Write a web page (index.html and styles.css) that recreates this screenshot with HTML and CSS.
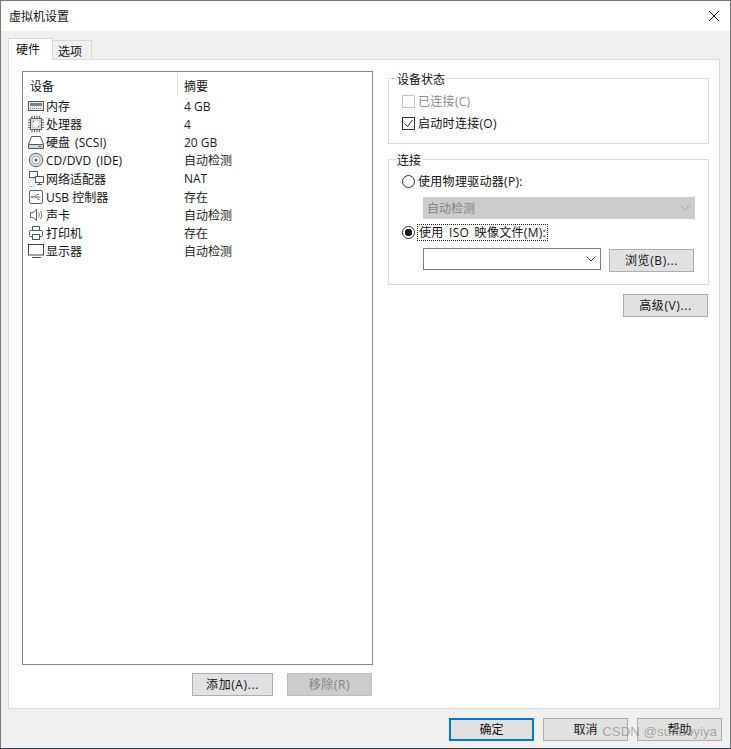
FILE: index.html
```html
<!DOCTYPE html>
<html lang="zh-CN">
  <head>
    <meta charset="UTF-8" />
    <title>虚拟机设置</title>
    <link rel="stylesheet" href="styles.css">
  </head>
  <body>
    <div class="window">
      <div class="titlebar">
        <span class="title">虚拟机设置</span>
        <svg class="close" width="12" height="12" viewBox="0 0 12 12"><path d="M1 1l10 10M11 1L1 11" stroke="#111" fill="none"/></svg>
      </div>
      <div class="content">
        <div class="tabs">
          <div class="tab active">硬件</div>
          <div class="tab">选项</div>
        </div>
        <div class="panel">
          <div class="left">
            <div class="list">
              <div class="list-head">
                <div class="col-device">设备</div>
                <div class="col-summary">摘要</div>
              </div>
              <div class="rows">
                <div class="row">
                  <svg class="icon" viewBox="0 0 16 16"><rect x="0.5" y="3.5" width="15" height="9" fill="#e4e6e8" stroke="#4f5a63"/><rect x="2" y="5" width="12" height="3" fill="#77828b"/><path d="M2 10.500h12" stroke="#77828b" stroke-dasharray="1 1"/></svg>
                  <span class="name">内存</span><span class="value">4 GB</span>
                </div>
                <div class="row">
                  <svg class="icon" viewBox="0 0 16 16"><rect x="2.500" y="2.500" width="11" height="11" fill="#fff" stroke="#55616b"/><path d="M4 0v2M6.500 0v2M9 0v2M11.500 0v2M4 14v2M6.500 14v2M9 14v2M11.500 14v2M0 4h2M0 6.500h2M0 9h2M0 11.500h2M14 4h2M14 6.500h2M14 9h2M14 11.500h2" stroke="#5f6a73" stroke-width="1.200"/><rect x="4" y="4" width="8" height="8" fill="#f4f4f4" stroke="#b6bcc1"/><rect x="5" y="5" width="1" height="1" fill="#333"/><rect x="10" y="10" width="1" height="1" fill="#555"/></svg>
                  <span class="name">处理器</span><span class="value">4</span>
                </div>
                <div class="row">
                  <svg class="icon" viewBox="0 0 16 16"><path d="M3.500 2.500h9l3 8v4H.5v-4z" fill="#fff" stroke="#4f5a63"/><path d="M.5 10.500h15" stroke="#4f5a63"/><rect x="1" y="11" width="14" height="3" fill="#d6d9dc"/><path d="M10.500 12.500h3" stroke="#4f5a63"/></svg>
                  <span class="name wide">硬盘 (SCSI)</span><span class="value">20 GB</span>
                </div>
                <div class="row">
                  <svg class="icon" viewBox="0 0 16 16"><circle cx="8" cy="8" r="6.800" fill="#d8dbde" stroke="#5a6670"/><circle cx="8" cy="8" r="4" fill="#fff" stroke="#a8afb5"/><circle cx="8" cy="8" r="1.500" fill="#4f5a63"/></svg>
                  <span class="name wide">CD/DVD (IDE)</span><span class="value">自动检测</span>
                </div>
                <div class="row">
                  <svg class="icon" viewBox="0 0 16 16"><rect x="1.500" y="0.500" width="8" height="6" fill="#fff" stroke="#4f5a63"/><path d="M5.500 7v2h-4" stroke="#9aa3aa" stroke-dasharray="1 1" fill="none"/><rect x="7.500" y="5.500" width="8" height="6" fill="#fff" stroke="#4f5a63"/><path d="M9 13.500h5M11.500 12v1" stroke="#4f5a63"/><path d="M1 11.500v4h5" stroke="#9aa3aa" stroke-dasharray="1 1" fill="none"/></svg>
                  <span class="name">网络适配器</span><span class="value">NAT</span>
                </div>
                <div class="row">
                  <svg class="icon" viewBox="0 0 16 16"><rect x="1.500" y="1.500" width="13" height="13" rx="1.500" fill="#fff" stroke="#5a6670"/><path d="M3.500 8h9M6 8l3-2.500h2M8 8l2 2.500h1.500" stroke="#6b767f" fill="none"/><circle cx="4" cy="8" r="1" fill="#6b767f"/></svg>
                  <span class="name">USB 控制器</span><span class="value">存在</span>
                </div>
                <div class="row">
                  <svg class="icon" viewBox="0 0 16 16"><path d="M2.500 5.500h2.500l3.500-3v11l-3.500-3H2.500z" fill="#fff" stroke="#5a6670"/><path d="M10.500 5.500c1 1.500 1 3.500 0 5M12.500 4c1.500 2.500 1.500 5.500 0 8" stroke="#6b767f" fill="none"/></svg>
                  <span class="name">声卡</span><span class="value">自动检测</span>
                </div>
                <div class="row">
                  <svg class="icon" viewBox="0 0 16 16"><path d="M4.500 5V1.500h7V5" fill="#fff" stroke="#4f5a63"/><rect x="1.500" y="5.500" width="13" height="6" rx="1" fill="#fff" stroke="#4f5a63"/><rect x="4.500" y="9.500" width="7" height="5" fill="#fff" stroke="#4f5a63"/></svg>
                  <span class="name">打印机</span><span class="value">存在</span>
                </div>
                <div class="row">
                  <svg class="icon" viewBox="0 0 16 16"><rect x="0.500" y="1.500" width="15" height="10.500" fill="#fff" stroke="#3f4a53"/><rect x="1" y="11" width="14" height="1" fill="#9aa3aa"/><path d="M4 14.500h9" stroke="#3f4a53"/></svg>
                  <span class="name">显示器</span><span class="value">自动检测</span>
                </div>
              </div>
            </div>
            <div class="list-actions">
              <div class="btn latin">添加(A)...</div>
              <div class="btn latin disabled">移除(R)</div>
            </div>
          </div>
          <div class="right">
            <fieldset class="group group-status">
              <legend>设备状态</legend>
              <div class="option muted"><span class="check off"></span>已连接(C)</div>
              <div class="option"><span class="check"><svg width="11" height="11" viewBox="0 0 11 11"><path d="M1.500 5.500l3 3 5-6.500" stroke="#222" fill="none"/></svg></span>启动时连接(O)</div>
            </fieldset>
            <fieldset class="group group-connect">
              <legend>连接</legend>
              <div class="option"><span class="radio"></span>使用物理驱动器(P):</div>
              <div class="select disabled-select">
                <span>自动检测</span>
                <svg width="10" height="6" viewBox="0 0 10 6"><path d="M.5 .5L5 5 9.500 .5" stroke="#a6a6a6" fill="none"/></svg>
              </div>
              <div class="option iso"><span class="radio on"></span><span class="focused wide">使用 ISO 映像文件(M):</span></div>
              <div class="iso-row">
                <div class="select">
                  <svg width="10" height="6" viewBox="0 0 10 6"><path d="M.5 .5L5 5 9.500 .5" stroke="#444" fill="none"/></svg>
                </div>
                <div class="btn latin">浏览(B)...</div>
              </div>
            </fieldset>
            <div class="advanced">
              <div class="btn latin">高级(V)...</div>
            </div>
          </div>
        </div>
        <div class="footer">
          <div class="btn primary">确定</div>
          <div class="btn">取消</div>
          <div class="btn">帮助</div>
        </div>
      </div>
      <div class="watermark">CSDN @sunboyiya</div>
    </div>
  </body>
</html>
```

FILE: styles.css
```css
* {
  box-sizing: border-box;
}
body {
  margin: 0;
  font-family: "Open Sans", "Noto Sans CJK SC", sans-serif;
  font-size: 12px;
  color: #111;
}
.window {
  position: relative;
  width: 731px;
  height: 749px;
  display: flex;
  flex-direction: column;
  background: #f0f0f0;
  border: 1px solid #777;
  border-bottom-color: #2f3e46;
  overflow: hidden;
}
.titlebar {
  height: 30px;
  flex: none;
  display: flex;
  align-items: center;
  justify-content: space-between;
  padding: 0 10px 0 8px;
  background: #fff;
}
.content {
  flex: 1;
  display: flex;
  flex-direction: column;
  padding: 7px 10px 0 7px;
}
.tabs {
  display: flex;
  align-items: flex-end;
  height: 21px;
  position: relative;
  z-index: 1;
}
.tab {
  width: 39px;
  height: 19px;
  line-height: 21px;
  padding-right: 4px;
  text-align: center;
  background: #f0f0f0;
  border: 1px solid #d9d9d9;
  border-bottom: none;
  border-left: none;
}
.tab.active {
  width: 45px;
  height: 22px;
  line-height: 22px;
  margin-bottom: -1px;
  padding: 0 0 0 7px;
  text-align: left;
  background: #fff;
  border-left: 1px solid #d9d9d9;
}
.panel {
  height: 650px;
  flex: none;
  display: flex;
  padding: 11px 11px 12px 13px;
  background: #fff;
  border: 1px solid #d9d9d9;
}
.left {
  width: 351px;
  display: flex;
  flex-direction: column;
  flex: none;
}
.list {
  flex: 1;
  border: 1px solid #828790;
}
.list-head {
  display: flex;
  height: 25px;
  line-height: 29px;
}
.col-device {
  width: 155px;
  padding-left: 7px;
  border-right: 1px solid #e5e5e5;
}
.col-summary {
  padding-left: 6px;
}
.rows {
  display: grid;
  grid-auto-rows: 18.125px;
}
.row {
  display: flex;
  align-items: center;
  padding-left: 5px;
}
.icon {
  width: 16px;
  height: 16px;
  flex: none;
  overflow: visible;
}
.name {
  width: 138px;
  margin-left: 2px;
  flex: none;
}
.wide {
  word-spacing: 2px;
}
.value {
  color: #222;
}
.list-actions {
  display: flex;
  justify-content: flex-end;
  gap: 14px;
  margin-top: 8px;
  margin-right: 1px;
}
.btn {
  width: 85px;
  height: 23px;
  line-height: 21px;
  text-align: center;
  background: #e1e1e1;
  border: 1px solid #adadad;
}
.btn.latin {
  letter-spacing: 0.6px;
}
.list-actions .btn:first-child {
  width: 81px;
}
.btn.disabled {
  color: #838383;
  background: #cccccc;
  border-color: #bfbfbf;
}
.right {
  width: 321px;
  margin-left: 15px;
  margin-top: -2px;
  flex: none;
}
.group {
  margin: 0 0 6px;
  padding: 0;
  min-width: 0;
  border: 1px solid #dcdcdc;
}
.group legend {
  margin-left: -6px;
  padding: 4px 1px 0;
  line-height: 14px;
}
.group-status {
  height: 75px;
  padding: 3px 0 0 13px;
}
.group-connect {
  height: 135px;
  padding: 4px 13px 0 13px;
}
.option {
  display: flex;
  align-items: center;
  height: 18px;
  gap: 3px;
  letter-spacing: 0.3px;
}
.group-status .option {
  height: 22px;
}
.muted {
  color: #8a8a8a;
}
.check {
  width: 13px;
  height: 13px;
  display: flex;
  align-items: center;
  justify-content: center;
  background: #fff;
  border: 1px solid #333;
}
.check.off {
  border-color: #c4c4c4;
}
.radio {
  width: 13px;
  height: 13px;
  border-radius: 50%;
  background: #fff;
  border: 1px solid #333;
}
.radio.on {
  background: radial-gradient(circle, #1a1a1a 0 3.5px, #fff 4px);
}
.select {
  display: flex;
  align-items: center;
  justify-content: flex-end;
  padding: 0 4px 0 0;
  background: #fff;
  border: 1px solid #7a7a7a;
}
.disabled-select {
  width: 272px;
  height: 22px;
  margin: 7px 0 0 21px;
  justify-content: space-between;
  padding: 0 4px 0 3px;
  color: #838383;
  background: #cccccc;
  border-color: #cccccc;
}
.iso {
  margin-top: 4px;
}
.focused {
  outline: 1px dotted #222;
  padding: 0 1px;
  line-height: 15px;
}
.iso-row {
  display: flex;
  align-items: flex-start;
  gap: 8px;
  margin: 7px 0 0 21px;
}
.iso-row .select {
  width: 178px;
  height: 22px;
}
.iso-row .btn {
  margin-top: 1px;
}
.advanced {
  display: flex;
  justify-content: flex-end;
  padding-right: 1px;
  margin-top: 9px;
}
.footer {
  display: flex;
  justify-content: flex-end;
  gap: 9px;
  margin-top: 9px;
  margin-right: -2px;
}
.btn.primary {
  border: 2px solid #0078d7;
  line-height: 19px;
}
.watermark {
  position: absolute;
  right: 13px;
  top: 723px;
  font-family: "Liberation Sans", sans-serif;
  font-size: 13.3px;
  color: rgba(130, 130, 130, 0.65);
}
```
